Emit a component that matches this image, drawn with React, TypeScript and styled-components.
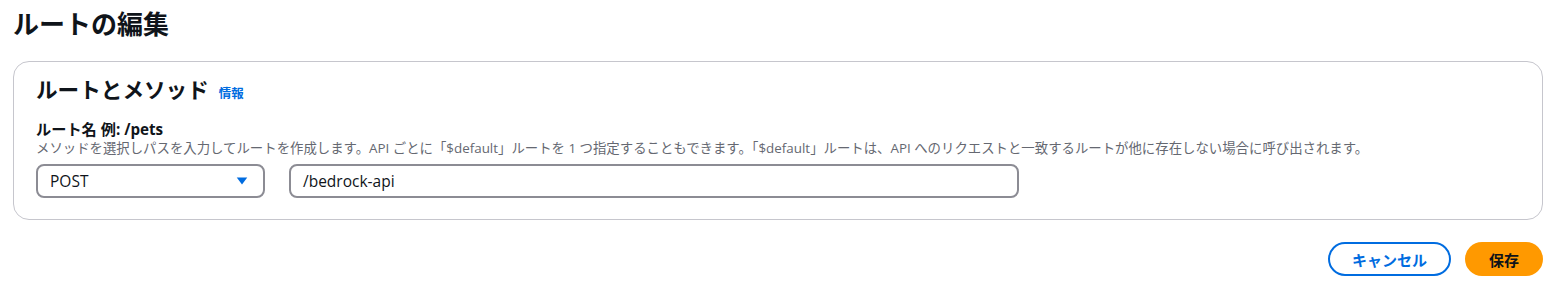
import styled, { createGlobalStyle } from "styled-components";

const GlobalStyle = createGlobalStyle`
    body {
        margin: 0;
        background: #ffffff;
        font-family: "Open Sans", "Noto Sans CJK JP", sans-serif;
        color: #0f141a;
    }
`;

const Page = styled.div`
    padding: 7px 13px 0 13px;
`;

const Title = styled.h1`
    margin: 0 0 20px 0;
    font-size: 26px;
    line-height: 34px;
    font-weight: 700;
`;

const Container = styled.section`
    border: 1px solid #c6c6cd;
    border-radius: 16px;
    padding: 14px 22px 21px 22px;
`;

const HeaderRow = styled.div`
    display: flex;
    align-items: baseline;
    gap: 10px;
    margin-bottom: 15px;
`;

const Heading = styled.h2`
    margin: 0;
    font-size: 21.6px;
    line-height: 28px;
    font-weight: 700;
`;

const InfoLink = styled.a`
    font-size: 12.5px;
    font-weight: 700;
    color: #006ce0;
    text-decoration: none;
`;

const Label = styled.div`
    font-size: 15.2px;
    line-height: 20px;
    font-weight: 700;
`;

const Description = styled.div`
    font-size: 13.4px;
    line-height: 19px;
    color: #656871;
    margin-bottom: 6px;
    white-space: nowrap;
`;

const FieldRow = styled.div`
    display: flex;
    gap: 24px;
`;

const Box = styled.div<{ $width: number }>`
    box-sizing: border-box;
    width: ${p => p.$width}px;
    height: 34px;
    border: 2px solid #8c8c94;
    border-radius: 8px;
    display: flex;
    align-items: center;
    justify-content: space-between;
    padding: 0 14px 0 12px;
    font-size: 15.5px;
`;

const Caret = styled.svg`
    width: 14px;
    height: 14px;
`;

const Actions = styled.div`
    display: flex;
    justify-content: flex-end;
    gap: 14px;
    margin-top: 22px;
`;

const Button = styled.button<{ $primary?: boolean }>`
    box-sizing: border-box;
    height: 34px;
    border-radius: 20px;
    padding: 0 22px;
    font-family: inherit;
    font-size: 15px;
    font-weight: 700;
    border: 2px solid ${p => (p.$primary ? "#ff9900" : "#006ce0")};
    background: ${p => (p.$primary ? "#ff9900" : "#ffffff")};
    color: ${p => (p.$primary ? "#0f141a" : "#006ce0")};
`;

export default function App() {
    return (
        <Page>
            <GlobalStyle />
            <Title>ルートの編集</Title>
            <Container>
                <HeaderRow>
                    <Heading>ルートとメソッド</Heading>
                    <InfoLink href="#">情報</InfoLink>
                </HeaderRow>
                <Label>ルート名 例: /pets</Label>
                <Description>
                    メソッドを選択しパスを入力してルートを作成します。API ごとに「$default」ルートを 1 つ指定することもできます。「$default」ルートは、API へのリクエストと一致するルートが他に存在しない場合に呼び出されます。
                </Description>
                <FieldRow>
                    <Box $width={229}>
                        <span>POST</span>
                        <Caret viewBox="0 0 16 16">
                            <path d="M2 4h12L8 12z" fill="#006ce0" />
                        </Caret>
                    </Box>
                    <Box $width={730}>
                        <span>/bedrock-api</span>
                    </Box>
                </FieldRow>
            </Container>
            <Actions>
                <Button>キャンセル</Button>
                <Button $primary>保存</Button>
            </Actions>
        </Page>
    );
}
